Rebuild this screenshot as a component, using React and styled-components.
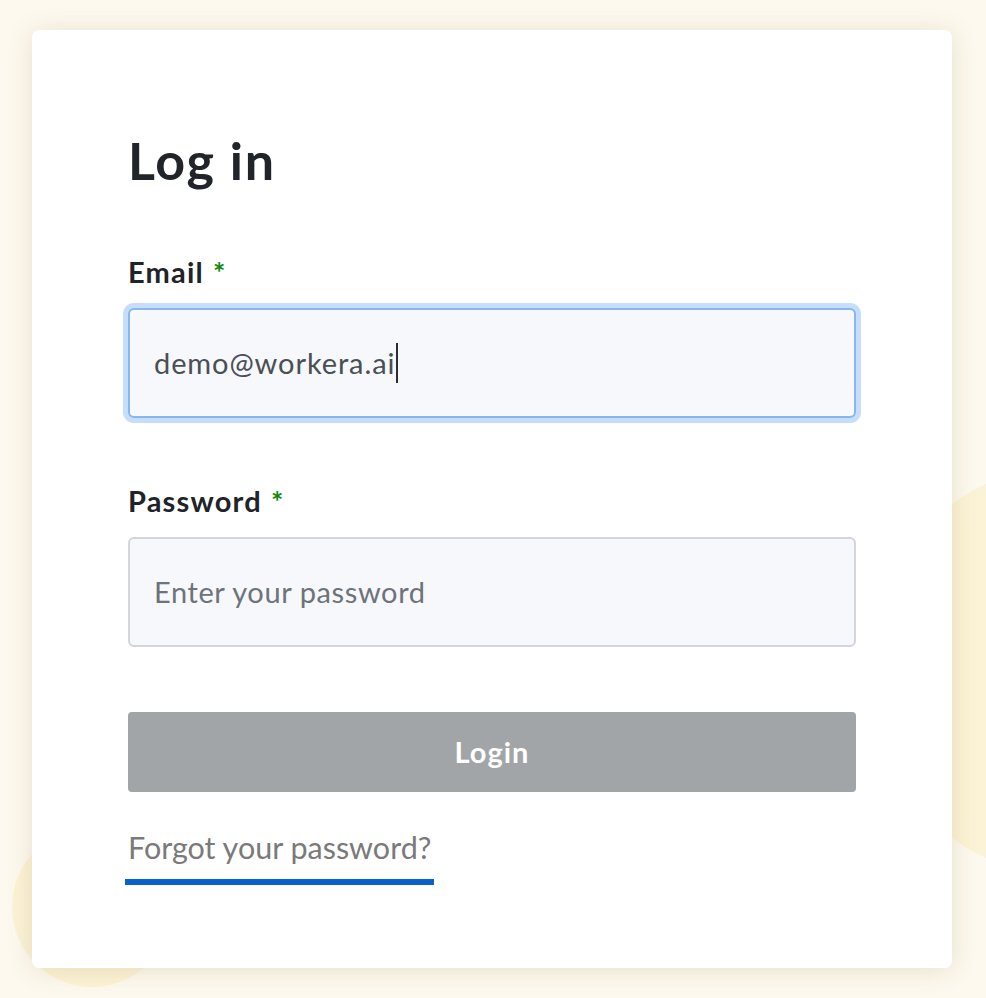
import React from "react";
import styled, { createGlobalStyle } from "styled-components";

const Global = createGlobalStyle`
  html, body { margin: 0; padding: 0; }
  body {
    background: #fdf9ee;
    font-family: Lato, "Noto Sans", sans-serif;
    overflow: hidden;
  }
  * { box-sizing: border-box; }
`;

const Page = styled.div`
  position: relative;
  width: 986px;
  height: 998px;
  overflow: hidden;
  padding: 30px 34px 30px 32px;
`;

const Blob = styled.div`
  position: absolute;
  border-radius: 50%;
  background: #fcf3d6;
  left: ${(p) => p.$x}px;
  top: ${(p) => p.$y}px;
  width: ${(p) => p.$r * 2}px;
  height: ${(p) => p.$r * 2}px;
`;

const Card = styled.main`
  position: relative;
  width: 920px;
  height: 938px;
  background: #ffffff;
  border-radius: 7px;
  box-shadow: 0 2px 26px rgba(120, 95, 30, 0.16);
  padding: 99px 96px 0 96px;
`;

const Title = styled.h1`
  margin: 0 0 64px;
  font-size: 52px;
  line-height: 1.2;
  font-weight: 700;
  letter-spacing: 1.6px;
  color: #212429;
`;

const Field = styled.div`
  display: flex;
  flex-direction: column;
  margin-bottom: ${(p) => p.$mb}px;
`;

const Label = styled.label`
  font-size: 29px;
  line-height: 33.6px;
  font-weight: 700;
  letter-spacing: 1.2px;
  color: #202328;
  margin-bottom: 19px;
`;

const Star = styled.span`
  color: #0b8a0b;
  margin-left: 9px;
`;

const Input = styled.div`
  height: 110px;
  border-radius: 6px;
  background: #f7f8fc;
  border: 2px solid ${(p) => (p.$focus ? "#86b8ee" : "#d3d6da")};
  box-shadow: ${(p) => (p.$focus ? "0 0 0 5px #c6ddfb" : "none")};
  display: flex;
  align-items: center;
  padding: 0 24px;
  font-size: 29px;
  letter-spacing: ${(p) => (p.$placeholder ? 0.6 : 0.9)}px;
  color: ${(p) => (p.$placeholder ? "#6d737a" : "#4a4f55")};
`;

const Caret = styled.span`
  display: inline-block;
  width: 2px;
  height: 40px;
  background: #2a2d31;
  margin-left: 1px;
`;

const Button = styled.button`
  width: 100%;
  height: 80px;
  border: none;
  border-radius: 4px;
  background: #a1a5a8;
  color: #ffffff;
  font-family: inherit;
  font-size: 29px;
  font-weight: 700;
  letter-spacing: 1px;
  margin-bottom: 37px;
`;

const Forgot = styled.a`
  display: inline-block;
  margin-left: -3px;
  padding: 0 3px 14px;
  border-bottom: 6px solid #0a62c9;
  font-size: 30.5px;
  color: #7a7a7a;
  text-decoration: none;
  line-height: 1.2;
`;

export default function App() {
  return (
    <>
      <Global />
      <Page>
        <Blob $x={867} $y={464} $r={207} />
        <Blob $x={12} $y={827} $r={80} />
        <Card>
          <Title>Log in</Title>
          <Field $mb={66}>
            <Label>
              Email<Star>*</Star>
            </Label>
            <Input $focus>
              demo@workera.ai
              <Caret />
            </Input>
          </Field>
          <Field $mb={65}>
            <Label>
              Password<Star>*</Star>
            </Label>
            <Input $placeholder>Enter your password</Input>
          </Field>
          <Button>Login</Button>
          <Forgot href="#">Forgot your password?</Forgot>
        </Card>
      </Page>
    </>
  );
}
